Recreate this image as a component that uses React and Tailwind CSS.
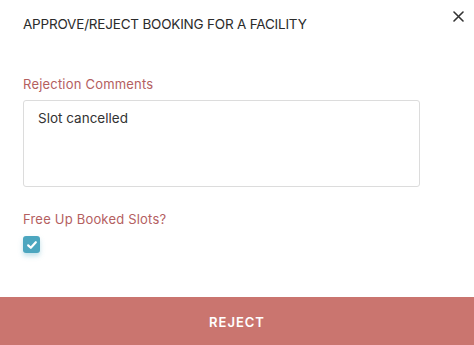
import React from "react";

const App = () => {
  return (
    <div
      className="w-[474px] h-[345px] bg-white flex flex-col overflow-hidden"
      style={{ fontFamily: "Inter, 'Liberation Sans', sans-serif" }}
    >
      <div className="flex items-start justify-between pl-[23px] pr-[6px] pt-[14px]">
        <h2 className="text-[13.5px] leading-[20px] text-[#2b2b2b] tracking-[-0.2px]">
          APPROVE/REJECT BOOKING FOR A FACILITY
        </h2>
        <button className="w-[20px] h-[20px] flex items-center justify-center text-[#333] mt-[-8px]">
          <svg width="11" height="11" viewBox="0 0 11 11" fill="none" stroke="currentColor" strokeWidth="1.6" strokeLinecap="round">
            <path d="M1 1L10 10M10 1L1 10" />
          </svg>
        </button>
      </div>

      <div className="px-[23px] pt-[42px] flex-1">
        <label className="block text-[13px] leading-[16px] text-[#b4605f] tracking-[0.2px]">
          Rejection Comments
        </label>
        <div className="mt-[8px] w-[397px] h-[87px] border border-[#dcdcdc] rounded-[3px] px-[14px] pt-[7px] text-[13.5px] leading-[20px] text-[#333]">
          Slot cancelled
        </div>

        <label className="block mt-[24px] text-[13px] leading-[16px] text-[#b4605f] tracking-[0.2px]">
          Free Up Booked Slots?
        </label>
        <div className="mt-[9px] w-[17px] h-[17px] rounded-[3px] bg-[#4ca6bf] flex items-center justify-center shadow-[0_3px_5px_rgba(76,166,191,0.35)]">
          <svg width="12" height="12" viewBox="0 0 11 11" fill="none" stroke="white" strokeWidth="2" strokeLinecap="round" strokeLinejoin="round">
            <path d="M2 5.8L4.4 8L9 3" />
          </svg>
        </div>
      </div>

      <button className="h-[48px] w-full bg-[#ca756f] text-white text-[13px] font-semibold tracking-[1px] pt-[4px]">
        REJECT
      </button>
    </div>
  );
};

export default App;
